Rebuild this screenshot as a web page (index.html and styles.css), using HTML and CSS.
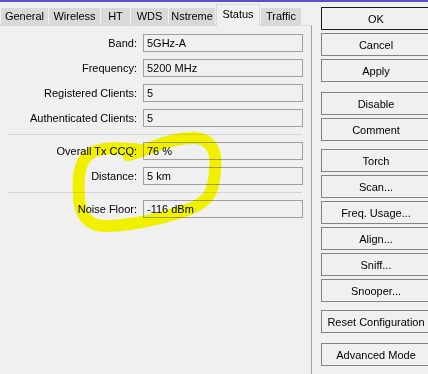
FILE: index.html
```html
<!DOCTYPE html>
<html>
<head>
<meta charset="utf-8">
<link rel="stylesheet" href="styles.css">
</head>
<body>
<div class="topbar"></div>
<div class="main">
  <div class="left">
    <div class="tabs">
      <div class="tab t-general">General</div>
      <div class="tab t-wireless">Wireless</div>
      <div class="tab t-ht">HT</div>
      <div class="tab t-wds">WDS</div>
      <div class="tab t-nstreme">Nstreme</div>
      <div class="tab t-status active">Status</div>
      <div class="tab t-traffic">Traffic</div>
    </div>
    <div class="panel">
      <div class="row"><span class="lbl">Band:</span><span class="fld">5GHz-A</span></div>
      <div class="row"><span class="lbl">Frequency:</span><span class="fld">5200 MHz</span></div>
      <div class="row"><span class="lbl">Registered Clients:</span><span class="fld">5</span></div>
      <div class="row"><span class="lbl">Authenticated Clients:</span><span class="fld">5</span></div>
      <div class="sep"></div>
      <div class="row"><span class="lbl">Overall Tx CCQ:</span><span class="fld">76 %</span></div>
      <div class="row"><span class="lbl">Distance:</span><span class="fld">5 km</span></div>
      <div class="sep"></div>
      <div class="row"><span class="lbl">Noise Floor:</span><span class="fld">-116 dBm</span></div>
    </div>
  </div>
  <div class="buttons">
    <button class="btn default">OK</button>
    <button class="btn">Cancel</button>
    <button class="btn">Apply</button>
    <button class="btn g7">Disable</button>
    <button class="btn">Comment</button>
    <button class="btn g5">Torch</button>
    <button class="btn">Scan...</button>
    <button class="btn">Freq. Usage...</button>
    <button class="btn">Align...</button>
    <button class="btn">Sniff...</button>
    <button class="btn">Snooper...</button>
    <button class="btn g5">Reset Configuration</button>
    <button class="btn g7">Advanced Mode</button>
  </div>
</div>
<svg class="scribble" width="428" height="374" viewBox="0 0 428 374">
  <path d="M 128,155 C 150,150 170,137 195,138 C 212,139 217,152 215,170 C 214,190 210,201 190,209 C 165,218 130,226 105,226 C 88,226 80,215 79,198 C 78,180 78,165 88,155 C 98,147 115,147 142,150" />
</svg>
</body>
</html>
```

FILE: styles.css
```css
html, body {
  margin: 0;
  padding: 0;
}
body {
  width: 428px;
  height: 374px;
  overflow: hidden;
  position: relative;
  background: #f0f0f0;
  font-family: "Liberation Sans", Arial, sans-serif;
  font-size: 11px;
  color: #000;
}
.topbar {
  height: 2px;
  background: #5850d0;
}
.main {
  display: flex;
  height: 372px;
}
.left {
  width: 312px;
  flex: none;
  display: flex;
  flex-direction: column;
}
.tabs {
  height: 23px;
  display: flex;
  align-items: flex-end;
  padding-left: 1px;
  gap: 1px;
  position: relative;
  z-index: 1;
}
.tab {
  height: 17px;
  line-height: 17px;
  box-sizing: border-box;
  background: #d9d9d9;
  text-align: center;
  white-space: nowrap;
}
.tab.active {
  height: 22px;
  line-height: 18px;
  margin-bottom: -1px;
  background: #f0f0f0;
  border: 1px solid #d9d9d9;
  border-bottom: none;
}
.t-general { width: 47px; }
.t-wireless { width: 51px; }
.t-ht { width: 29px; }
.t-wds { width: 37px; }
.t-nstreme { width: 46px; }
.t-status { width: 44px; }
.t-traffic { width: 40px; }
.panel {
  flex: 1;
  border-top: 1px solid #d9d9d9;
  border-right: 1px solid #a0a0a0;
  padding-top: 8px;
}
.row {
  display: flex;
  height: 18px;
  margin-bottom: 7px;
}
.lbl {
  width: 137px;
  text-align: right;
  line-height: 18px;
  white-space: nowrap;
  margin-right: 6px;
}
.fld {
  width: 160px;
  height: 18px;
  box-sizing: border-box;
  border: 1px solid #a0a0a0;
  padding-left: 3px;
  line-height: 16px;
  white-space: nowrap;
}
.sep {
  height: 1px;
  width: 294px;
  margin: 2px 0 7px 8px;
  background: #d5d5d5;
}
.buttons {
  margin-left: 9px;
  padding-top: 5px;
  display: flex;
  flex-direction: column;
  gap: 3px;
}
.btn {
  width: 110px;
  height: 23px;
  margin: 0;
  padding: 0;
  box-sizing: border-box;
  border: 1px solid #838383;
  background: #f0f0f0;
  font-family: "Liberation Sans", Arial, sans-serif;
  font-size: 11px;
  color: #000;
  text-align: center;
  white-space: nowrap;
  flex: none;
}
.btn.default {
  border-color: #1a1a1a;
}
.g7 { margin-top: 7px; }
.g5 { margin-top: 5px; }
.scribble {
  position: absolute;
  left: 0;
  top: 0;
  pointer-events: none;
  mix-blend-mode: multiply;
}
.scribble path {
  fill: none;
  stroke: #ffff00;
  stroke-width: 12;
  stroke-linecap: round;
  stroke-linejoin: round;
}
```
